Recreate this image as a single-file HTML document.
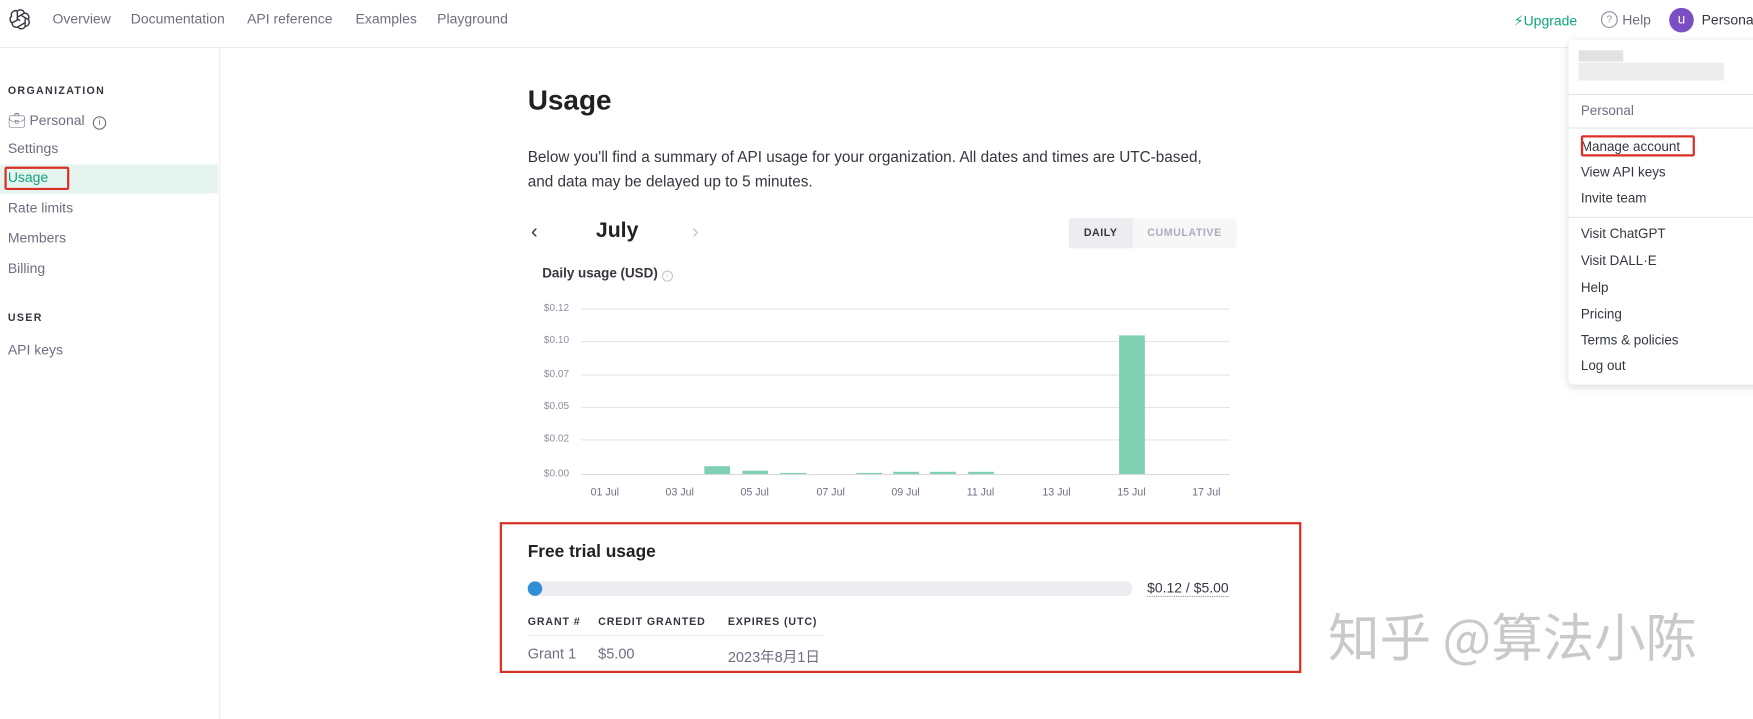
<!DOCTYPE html>
<html><head><meta charset="utf-8"><style>
html,body{margin:0;padding:0;width:1753px;height:704px;overflow:hidden;background:#fff}
#w{position:absolute;left:0;top:0;width:1568px;height:630px;transform:scale(1.118);transform-origin:0 0;font-family:"Liberation Sans","Noto Sans CJK SC",sans-serif;color:#353740}
.a{position:absolute;white-space:nowrap}
.nav{font-size:12.5px;color:#6e6e80;top:10px}
.sb{font-size:12.5px;color:#6e6e80;left:7px}
.cap{font-size:9.5px;font-weight:bold;letter-spacing:1.2px;color:#353740}
.grid{position:absolute;left:520px;width:580px;height:1px;background:#e5e5e5}
.yl{position:absolute;left:480px;width:29px;text-align:right;font-size:9px;color:#8e8ea0}
.xl{position:absolute;top:435px;width:40px;text-align:center;font-size:9.5px;color:#6e6e80}
.bar{position:absolute;background:#7fcfb3;width:23px}
.dd{position:absolute;left:1414px;font-size:12px;color:#353740}
.hr{position:absolute;left:1403px;width:170px;height:1px;background:#e5e5e5}
</style></head><body><div id="w">
<svg class="a" style="left:8px;top:7px" width="20" height="20" viewBox="0 0 24 24" fill="none" stroke="#353740" stroke-width="1.5"><path d="M9 3.5a4.5 4.5 0 0 1 7.5 2.2 4.5 4.5 0 0 1 4.2 6.8 4.5 4.5 0 0 1-3.3 7.4 4.5 4.5 0 0 1-7.9 0.6 4.5 4.5 0 0 1-6.2-4.3A4.5 4.5 0 0 1 2.8 9 4.5 4.5 0 0 1 9 3.5z"/><path d="M9 3.5v8.5l3 1.7M16.5 5.7 9.2 10M20.7 12.5 13.5 8.3M17.4 19.9v-8.4M9.5 20.5l7.2-4.2M3.3 16.3l7.3-4.2"/></svg>
<div class="a nav" style="left:47px">Overview</div>
<div class="a nav" style="left:117px">Documentation</div>
<div class="a nav" style="left:221px">API reference</div>
<div class="a nav" style="left:318px">Examples</div>
<div class="a nav" style="left:391px">Playground</div>
<div class="a" style="left:1354px;top:11px;font-size:12.5px;color:#10a37f">&#x26A1;&#xFE0E;Upgrade</div>
<div class="a" style="left:1432px;top:10px;width:13px;height:13px;border:1.2px solid #8e8ea0;border-radius:50%;font-size:9px;text-align:center;line-height:13px;color:#8e8ea0">?</div>
<div class="a" style="left:1451px;top:11px;font-size:12.5px;color:#6e6e80">Help</div>
<div class="a" style="left:1493px;top:7px;width:22px;height:22px;border-radius:50%;background:#7b4fc4;color:#fff;font-size:12px;text-align:center;line-height:21px">u</div>
<div class="a" style="left:1522px;top:11px;font-size:12.5px;color:#353740">Personal</div>
<div class="a" style="left:0;top:42px;width:1568px;height:1px;background:#ececf1"></div>
<div class="a" style="left:196px;top:43px;width:1px;height:600px;background:#ececf1"></div>
<div class="a cap" style="left:7px;top:76px">ORGANIZATION</div>
<div class="a sb" style="top:101px">&#x1F4BC;&#xFE0E; Personal <span style="display:inline-block;width:10px;height:10px;border:1px solid #6e6e80;border-radius:50%;font-size:8px;line-height:10px;text-align:center;margin-left:4px">i</span></div>
<div class="a sb" style="top:126px">Settings</div>
<div class="a" style="left:0;top:147px;width:195px;height:26px;background:#e6f4f0"></div>
<div class="a sb" style="top:152px;color:#10a37f">Usage</div>
<div class="a" style="left:4px;top:149px;width:54px;height:17px;border:2px solid #d93025;border-radius:2px"></div>
<div class="a sb" style="top:179px">Rate limits</div>
<div class="a sb" style="top:206px">Members</div>
<div class="a sb" style="top:233px">Billing</div>
<div class="a cap" style="left:7px;top:279px">USER</div>
<div class="a sb" style="top:306px">API keys</div>
<div class="a" style="left:472px;top:76px;font-size:25px;font-weight:bold;color:#202123">Usage</div>
<div class="a" style="left:472px;top:130px;font-size:13.7px;line-height:21.5px;color:#353740">Below you'll find a summary of API usage for your organization. All dates and times are UTC-based,<br>and data may be delayed up to 5 minutes.</div>
<div class="a" style="left:475px;top:197px;font-size:18px;color:#353740">&#x2039;</div>
<div class="a" style="left:533px;top:196px;font-size:19px;font-weight:bold;color:#202123">July</div>
<div class="a" style="left:619px;top:197px;font-size:18px;color:#c5c5d2">&#x203A;</div>
<div class="a" style="left:956px;top:195px;width:150px;height:27px;background:#f7f7f8;border-radius:3px"></div>
<div class="a" style="left:956px;top:195px;width:57px;height:27px;background:#ececf1;border-radius:3px 0 0 3px;font-size:9.5px;font-weight:bold;color:#353740;text-align:center;line-height:27px;letter-spacing:.5px">DAILY</div>
<div class="a" style="left:1013px;top:195px;width:93px;height:27px;font-size:9.5px;font-weight:bold;color:#acacbe;text-align:center;line-height:27px;letter-spacing:.5px">CUMULATIVE</div>
<div class="a" style="left:485px;top:237px;font-size:12px;font-weight:bold;color:#353740">Daily usage (USD) <span style="display:inline-block;width:8px;height:8px;border:1px solid #c5c5d2;border-radius:50%;font-size:6px;line-height:8px;text-align:center;color:#c5c5d2;font-weight:normal">i</span></div>
<div class="grid" style="top:276px"></div><div class="grid" style="top:305px"></div><div class="grid" style="top:335px"></div><div class="grid" style="top:364px"></div><div class="grid" style="top:393px"></div><div class="grid" style="top:424px;background:#d9d9e3"></div>
<div class="yl" style="top:270px">$0.12</div><div class="yl" style="top:299px">$0.10</div><div class="yl" style="top:329px">$0.07</div><div class="yl" style="top:358px">$0.05</div><div class="yl" style="top:387px">$0.02</div><div class="yl" style="top:418px">$0.00</div>
<div class="bar" style="left:1001px;top:300px;height:124px"></div>
<div class="bar" style="left:630px;top:417px;height:7px"></div>
<div class="bar" style="left:664px;top:421px;height:3px"></div>
<div class="bar" style="left:698px;top:423px;height:1px"></div>
<div class="bar" style="left:766px;top:423px;height:1px"></div>
<div class="bar" style="left:799px;top:422px;height:2px"></div>
<div class="bar" style="left:832px;top:422px;height:2px"></div>
<div class="bar" style="left:866px;top:422px;height:2px"></div>
<div class="xl" style="left:521px">01 Jul</div><div class="xl" style="left:588px">03 Jul</div><div class="xl" style="left:655px">05 Jul</div><div class="xl" style="left:723px">07 Jul</div><div class="xl" style="left:790px">09 Jul</div><div class="xl" style="left:857px">11 Jul</div><div class="xl" style="left:925px">13 Jul</div><div class="xl" style="left:992px">15 Jul</div><div class="xl" style="left:1059px">17 Jul</div>
<div class="a" style="left:447px;top:467px;width:713px;height:131px;border:2px solid #d93025"></div>
<div class="a" style="left:472px;top:485px;font-size:15.5px;font-weight:bold;color:#202123">Free trial usage</div>
<div class="a" style="left:472px;top:520px;width:541px;height:13px;background:#ececf1;border-radius:7px"></div>
<div class="a" style="left:472px;top:520px;width:13px;height:13px;background:#2e8fd8;border-radius:50%"></div>
<div class="a" style="left:1026px;top:519px;font-size:12.5px;color:#353740;border-bottom:1px dotted #8e8ea0">$0.12 / $5.00</div>
<div class="a cap" style="left:472px;top:551px;letter-spacing:.8px">GRANT #</div>
<div class="a cap" style="left:535px;top:551px;letter-spacing:.8px">CREDIT GRANTED</div>
<div class="a cap" style="left:651px;top:551px;letter-spacing:.8px">EXPIRES (UTC)</div>
<div class="a" style="left:472px;top:568px;width:265px;height:1px;background:#ececf1"></div>
<div class="a" style="left:472px;top:577px;font-size:13px;color:#6e6e80">Grant 1</div>
<div class="a" style="left:535px;top:577px;font-size:13px;color:#6e6e80">$5.00</div>
<div class="a" style="left:651px;top:577px;font-size:13px;color:#6e6e80">2023年8月1日</div>
<div class="a" style="left:1188px;top:535px;font-size:46px;color:#c9c9c9;font-family:'Noto Sans CJK SC',sans-serif;letter-spacing:0px">知乎 @算法小陈</div>
<div class="a" style="left:1403px;top:36px;width:180px;height:308px;background:#fff;box-shadow:0 2px 8px rgba(0,0,0,.15);border-radius:4px"></div>
<div class="a" style="left:1412px;top:45px;width:40px;height:10px;background:#e2e2e2"></div>
<div class="a" style="left:1412px;top:56px;width:130px;height:16px;background:#ededed"></div>
<div class="hr" style="top:84px"></div>
<div class="dd" style="top:92px;color:#6e6e80">Personal</div>
<div class="hr" style="top:114px"></div>
<div class="dd" style="top:124px">Manage account</div>
<div class="a" style="left:1414px;top:121px;width:98px;height:15px;border:2px solid #d93025;border-radius:2px"></div>
<div class="dd" style="top:147px">View API keys</div>
<div class="dd" style="top:170px">Invite team</div>
<div class="hr" style="top:194px"></div>
<div class="dd" style="top:202px">Visit ChatGPT</div>
<div class="dd" style="top:226px">Visit DALL·E</div>
<div class="dd" style="top:250px">Help</div>
<div class="dd" style="top:274px">Pricing</div>
<div class="dd" style="top:297px">Terms &amp; policies</div>
<div class="dd" style="top:320px">Log out</div>
</div></body></html>
